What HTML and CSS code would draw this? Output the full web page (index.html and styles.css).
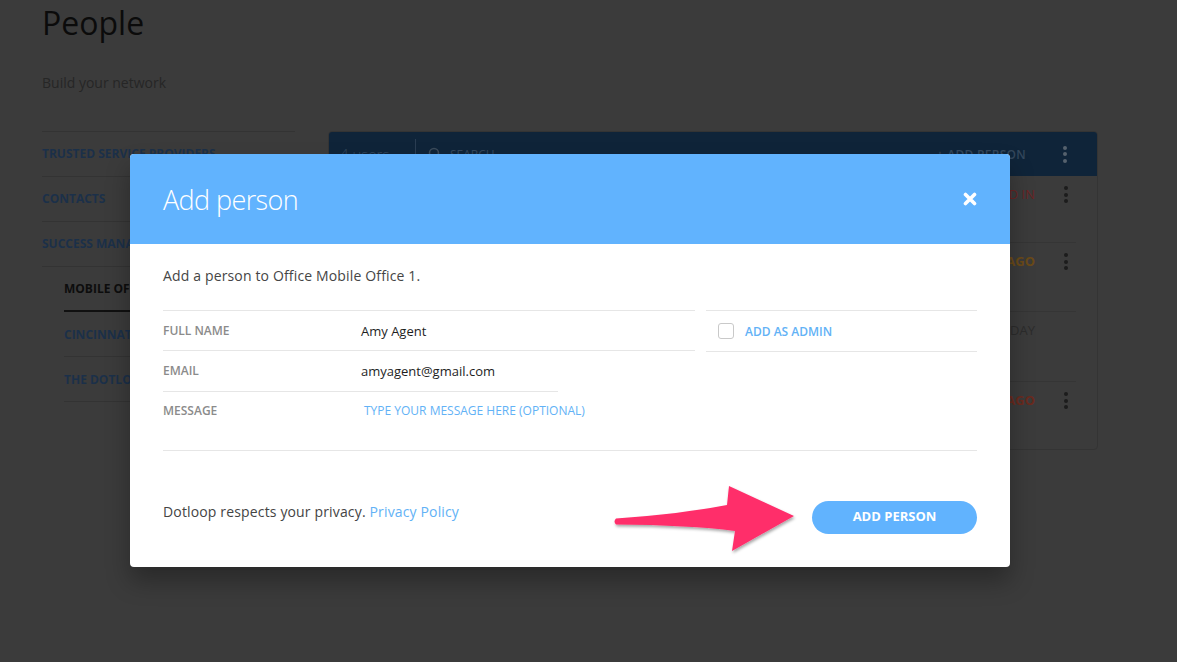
FILE: index.html
```html
<!DOCTYPE html>
<html>
<head>
<meta charset="utf-8">
<link rel="stylesheet" href="styles.css">
</head>
<body>
<div class="page">
  <header class="page-head">
    <h1>People</h1>
    <p>Build your network</p>
  </header>
  <div class="main">
    <nav class="side">
      <a class="nav-item">TRUSTED SERVICE PROVIDERS</a>
      <a class="nav-item">CONTACTS</a>
      <a class="nav-item">SUCCESS MANAGERS</a>
      <div class="sub">
        <a class="sub-item active"><span class="clip">MOBILE OFFICE 1</span></a>
        <a class="sub-item"><span class="clip">CINCINNATI OFFICE</span></a>
        <a class="sub-item"><span class="clip">THE DOTLOOP OFFICE</span></a>
      </div>
    </nav>
    <section class="panel">
      <div class="panel-head">
        <span class="users">4 users</span>
        <span class="vsep"></span>
        <svg class="search-ico" width="14" height="14" viewBox="0 0 14 14"><circle cx="6" cy="6" r="4.5" fill="none" stroke="#3a4a5a" stroke-width="1.6"/><path d="M9.5 9.5 L13 13" stroke="#3a4a5a" stroke-width="1.6"/></svg>
        <span class="search">SEARCH</span>
        <span class="spacer"></span>
        <span class="add">+ ADD PERSON</span>
        <span class="kebab light"><i></i><i></i><i></i></span>
      </div>
      <div class="panel-row r1"><span class="status red">NEVER LOGGED IN</span><span class="kebab"><i></i><i></i><i></i></span></div>
      <div class="panel-row r2"><span class="status orange">2 DAYS AGO</span><span class="kebab"><i></i><i></i><i></i></span></div>
      <div class="panel-row r3"><span class="status grey">TODAY</span><span class="kebab blank"></span></div>
      <div class="panel-row r4 last"><span class="status red2">5 DAYS AGO</span><span class="kebab"><i></i><i></i><i></i></span></div>
    </section>
  </div>
</div>

<div class="modal">
  <div class="modal-head">
    <h2>Add person</h2>
    <svg class="close" width="14" height="14" viewBox="0 0 14 14"><path d="M2.5 2.5 L11.5 11.5 M11.5 2.5 L2.5 11.5" stroke="#fff" stroke-width="3.6" stroke-linecap="round"/></svg>
  </div>
  <div class="modal-body">
    <p class="intro">Add a person to Office Mobile Office 1.</p>
    <div class="form">
      <div class="fields">
        <div class="row name"><span class="label">FULL NAME</span><span class="value">Amy Agent</span></div>
        <div class="row email"><span class="label">EMAIL</span><span class="value">amyagent@gmail.com</span></div>
        <div class="row message"><span class="label">MESSAGE</span><span class="placeholder">TYPE YOUR MESSAGE HERE (OPTIONAL)</span></div>
      </div>
      <div class="admin">
        <span class="checkbox"></span>
        <span class="admin-label">ADD AS ADMIN</span>
      </div>
    </div>
    <div class="divider"></div>
    <div class="footer">
      <p class="privacy">Dotloop respects your privacy. <a class="link">Privacy Policy</a></p>
      <button class="btn">ADD PERSON</button>
    </div>
  </div>
</div>

<svg class="arrow" width="1177" height="662" viewBox="0 0 1177 662">
  <defs>
    <filter id="sh" x="-20%" y="-40%" width="140%" height="180%">
      <feDropShadow dx="1" dy="2" stdDeviation="1.5" flood-color="#000" flood-opacity="0.35"/>
    </filter>
  </defs>
  <path filter="url(#sh)" fill="#ff2d6b" d="M616,518.5 Q680,514 727,505 L729,486 L794,516 L732,551 L735,531 Q690,525 616,524.5 Q613,521.5 616,518.5 Z"/>
</svg>
</body>
</html>
```

FILE: styles.css
```css
* { box-sizing: border-box; }

body {
  margin: 0;
  width: 1177px;
  height: 662px;
  overflow: hidden;
  position: relative;
  background: #3b3b3b;
  font-family: "Open Sans", "Liberation Sans", sans-serif;
}

.page {
  padding: 3px 0 0 42px;
}

.page-head h1 {
  margin: 0;
  font-size: 32px;
  font-weight: 400;
  line-height: 40px;
  color: #0b0b0b;
}

.page-head p {
  margin: 30px 0 0;
  font-size: 14px;
  line-height: 20px;
  color: #262626;
}

.main {
  display: flex;
  gap: 33px;
  margin-top: 38px;
}

/* left nav */
.side {
  width: 253px;
  border-top: 1px solid #333;
  display: flex;
  flex-direction: column;
}

.nav-item {
  display: flex;
  align-items: center;
  height: 45px;
  border-bottom: 1px solid #333;
  font-size: 12px;
  font-weight: 700;
  color: #1b3049;
  white-space: nowrap;
  padding-bottom: 1px;
}

.sub {
  padding-left: 22px;
  display: flex;
  flex-direction: column;
}

.sub-item {
  display: flex;
  align-items: center;
  height: 45px;
  border-bottom: 1px solid #333;
  font-size: 12px;
  font-weight: 700;
  color: #1b3049;
  white-space: nowrap;
}

.sub-item .clip {
  max-width: 66px;
  overflow: hidden;
}

.sub-item.active {
  color: #0d0d0d;
  border-bottom: 2px solid #101010;
}

/* panel */
.panel {
  width: 770px;
  height: 319px;
  border: 1px solid #343434;
  border-radius: 4px;
  overflow: hidden;
}

.panel-head {
  height: 44px;
  background: #0f2439;
  display: flex;
  align-items: center;
  padding: 0 0 0 11px;
  color: #33475c;
}

.users {
  font-size: 15px;
  font-weight: 300;
  width: 75px;
}

.vsep {
  width: 1px;
  height: 30px;
  background: #2a3d52;
  margin-right: 12px;
}

.search-ico { margin-right: 8px; }

.search {
  font-size: 12px;
}

.spacer { flex: 1; }

.add {
  font-size: 12px;
  font-weight: 600;
  letter-spacing: 0.3px;
}

.kebab {
  display: flex;
  flex-direction: column;
  gap: 2.5px;
  width: 4px;
  margin: 0 30px 0 37px;
}

.kebab i {
  display: block;
  width: 4px;
  height: 4px;
  border-radius: 50%;
  background: #1c1c1c;
}

.kebab.light i { background: #55616d; }

.panel-row {
  display: flex;
  justify-content: flex-end;
  align-items: flex-start;
  margin-right: 21px;
  border-bottom: 1px solid #353535;
  padding-top: 9px;
}

.panel-row .kebab {
  margin: 1px 8px 0 29px;
}

.panel-row .kebab.blank { height: 16px; }

.r1 { height: 67px; }
.r2 { height: 69px; }
.r3 { height: 70px; }
.r4 { height: 69px; border-bottom: none; }

.status {
  font-size: 13px;
  line-height: 18px;
}

.status.red { color: #6a2424; }
.status.orange { color: #6a4a18; font-weight: 700; }
.status.grey { color: #2c2c2c; }
.status.red2 { color: #6a2a1e; font-weight: 700; }

/* modal */
.modal {
  position: absolute;
  left: 130px;
  top: 154px;
  width: 880px;
  border-radius: 4px;
  overflow: hidden;
  background: #fff;
  box-shadow: 0 14px 24px rgba(0, 0, 0, 0.3);
}

.modal-head {
  height: 90px;
  background: #61b3fe;
  display: flex;
  align-items: center;
  justify-content: space-between;
  padding: 0 33px;
}

.modal-head h2 {
  margin: 0;
  font-size: 27px;
  font-weight: 300;
  color: #fff;
  line-height: 36px;
  letter-spacing: -0.6px;
  padding-top: 2px;
}

.modal-body {
  padding: 22px 33px 33px;
}

.intro {
  margin: 0;
  font-size: 14px;
  line-height: 20px;
  color: #454545;
  letter-spacing: 0.15px;
}

.form {
  display: flex;
  gap: 11px;
  margin-top: 24px;
}

.fields {
  width: 532px;
  border-top: 1px solid #e6e6e6;
}

.row {
  display: flex;
  align-items: center;
}

.row.name {
  height: 40px;
  border-bottom: 1px solid #e6e6e6;
}

.row.email {
  width: 395px;
  height: 41px;
  border-bottom: 1px solid #e6e6e6;
}

.row.message {
  height: 58px;
  align-items: flex-start;
  padding-top: 10px;
}

.label {
  width: 198px;
  flex: none;
  font-size: 12px;
  font-weight: 600;
  color: #8b8b8b;
  line-height: 18px;
}

.value {
  font-size: 13px;
  color: #1e1e1e;
  line-height: 18px;
}

.placeholder {
  font-size: 12px;
  color: #62b2f6;
  line-height: 18px;
  padding-left: 3px;
}

.admin {
  width: 271px;
  flex: none;
  height: 42px;
  border-top: 1px solid #e6e6e6;
  border-bottom: 1px solid #e6e6e6;
  display: flex;
  align-items: center;
  padding-left: 12px;
}

.checkbox {
  width: 16px;
  height: 16px;
  border: 1px solid #c9c9c9;
  border-radius: 3px;
  margin-right: 11px;
}

.admin-label {
  font-size: 12px;
  font-weight: 600;
  color: #62b2f6;
}

.divider {
  height: 1px;
  background: #e6e6e6;
}

.footer {
  display: flex;
  justify-content: space-between;
  align-items: flex-start;
  padding-top: 50px;
}

.privacy {
  margin: 1px 0 0;
  font-size: 14px;
  line-height: 20px;
  color: #444;
  letter-spacing: 0.15px;
}

.link { color: #62b2f6; }

.btn {
  width: 165px;
  height: 33px;
  border: none;
  border-radius: 17px;
  background: #61b3fe;
  color: #fff;
  font-family: "Open Sans", "Liberation Sans", sans-serif;
  font-size: 13px;
  font-weight: 700;
  line-height: 31px;
  padding: 0 0 2px;
}

.arrow {
  position: absolute;
  left: 0;
  top: 0;
  pointer-events: none;
}
```
